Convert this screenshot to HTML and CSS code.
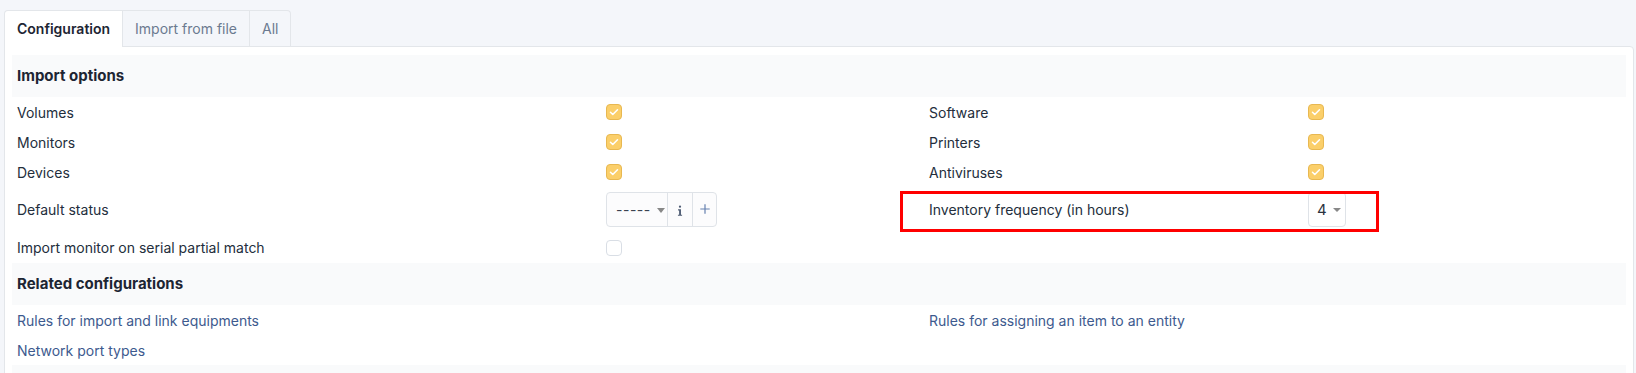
FILE: index.html
```html
<!DOCTYPE html>
<html lang="en">
<head>
<meta charset="utf-8">
<title>Inventory configuration</title>
<link rel="stylesheet" href="styles.css">
</head>
<body>
<div class="page">
  <ul class="tabs">
    <li class="tab active">Configuration</li>
    <li class="tab">Import from file</li>
    <li class="tab">All</li>
  </ul>
  <div class="card">
    <div class="band">Import options</div>
    <div class="grid">
      <div class="cell label">Volumes</div>
      <div class="cell"><span class="check on"><svg viewBox="0 0 16 16"><path d="M4 8.3l2.6 2.5L12 5.4"/></svg></span></div>
      <div class="cell label">Software</div>
      <div class="cell"><span class="check on"><svg viewBox="0 0 16 16"><path d="M4 8.3l2.6 2.5L12 5.4"/></svg></span></div>

      <div class="cell label">Monitors</div>
      <div class="cell"><span class="check on"><svg viewBox="0 0 16 16"><path d="M4 8.3l2.6 2.5L12 5.4"/></svg></span></div>
      <div class="cell label">Printers</div>
      <div class="cell"><span class="check on"><svg viewBox="0 0 16 16"><path d="M4 8.3l2.6 2.5L12 5.4"/></svg></span></div>

      <div class="cell label">Devices</div>
      <div class="cell"><span class="check on"><svg viewBox="0 0 16 16"><path d="M4 8.3l2.6 2.5L12 5.4"/></svg></span></div>
      <div class="cell label">Antiviruses</div>
      <div class="cell"><span class="check on"><svg viewBox="0 0 16 16"><path d="M4 8.3l2.6 2.5L12 5.4"/></svg></span></div>

      <div class="cell label tall">Default status</div>
      <div class="cell tall">
        <div class="group">
          <span class="sel">-----<i class="caret"></i></span>
          <span class="btn"><svg viewBox="0 0 10 16" class="info"><circle cx="5" cy="3.2" r="1.4"/><path d="M2.6 6.4h3.6v6.8h1.4v1.5H2.4v-1.5h1.5V7.9H2.6z"/></svg></span>
          <span class="btn"><svg viewBox="0 0 14 14" class="plus"><path d="M7 1.5v11M1.5 7h11"/></svg></span>
        </div>
      </div>
      <div class="cell label tall">Inventory frequency (in hours)</div>
      <div class="cell tall"><span class="sel small">4<i class="caret"></i></span></div>

      <div class="cell label">Import monitor on serial partial match</div>
      <div class="cell"><span class="check"></span></div>
      <div class="cell"></div>
      <div class="cell"></div>
    </div>
    <div class="band">Related configurations</div>
    <div class="grid">
      <div class="cell span2"><a href="#">Rules for import and link equipments</a></div>
      <div class="cell span2"><a href="#">Rules for assigning an item to an entity</a></div>
      <div class="cell span2"><a href="#">Network port types</a></div>
      <div class="cell span2"></div>
    </div>
    <div class="band"></div>
    <div class="highlight"></div>
  </div>
</div>
</body>
</html>
```

FILE: styles.css
```css
html, body {
  margin: 0;
  padding: 0;
}
body {
  background: #f4f6fa;
  font-family: Inter, "Noto Sans", sans-serif;
  font-size: 14px;
  color: #1f2937;
  height: 373px;
  overflow: hidden;
}
.page {
  padding: 10px 2px 0 4px;
}
.tabs {
  list-style: none;
  margin: 0;
  padding: 0;
  display: flex;
  position: relative;
  z-index: 2;
}
.tab {
  height: 35px;
  line-height: 35px;
  padding: 0 12px;
  border: 1px solid #e3e6ea;
  border-bottom: none;
  margin-right: -1px;
  color: #6b7a90;
  background: #f4f6fa;
}
.tab:first-child {
  border-top-left-radius: 4px;
}
.tab:last-child {
  border-top-right-radius: 4px;
}
.tab.active {
  background: #fff;
  color: #1d2533;
  font-weight: 600;
  height: 36px;
  margin-bottom: -1px;
}
.card {
  position: relative;
  background: #fff;
  border: 1px solid #e3e6ea;
  border-top-right-radius: 4px;
  padding: 8px 7px 0 7px;
  height: 400px;
}
.band {
  height: 42px;
  line-height: 42px;
  background: #f9fafb;
  padding-left: 5px;
  font-weight: 700;
  font-size: 15px;
  color: #1d2533;
}
.grid {
  display: grid;
  grid-template-columns: 589px 323px 379px 1fr;
}
.cell {
  height: 30px;
  display: flex;
  align-items: center;
  padding-left: 5px;
}
.cell.tall {
  height: 45px;
}
.grid .cell:nth-last-child(-n+4) {
  height: 31px;
}
.cell.span2 {
  grid-column: span 2;
  height: 30px !important;
}
.label {
  color: #232e3c;
}
a {
  color: #3d5a8e;
  text-decoration: none;
}
.check {
  width: 14px;
  height: 14px;
  border: 1px solid #d9dee5;
  border-radius: 4px;
  background: #fff;
  display: inline-flex;
  align-items: center;
  justify-content: center;
}
.check.on {
  background: #fbcf6a;
  border-color: #e8b851;
}
.check svg {
  width: 16px;
  height: 16px;
  fill: none;
  stroke: #fff;
  stroke-width: 1.8;
  stroke-linecap: round;
  stroke-linejoin: round;
}
.group {
  display: flex;
  height: 33px;
  border: 1px solid #dfe3e8;
  border-radius: 4px;
  background: #fcfcfd;
}
.sel {
  display: inline-flex;
  align-items: center;
  height: 33px;
  padding: 0 0 0 9px;
  width: 51px;
  color: #3a4250;
  letter-spacing: 0.5px;
  border-right: 1px solid #dfe3e8;
}
.sel.small {
  width: 28px;
  height: 33px;
  border: 1px solid #dfe3e8;
  border-radius: 4px;
  background: #fff;
  padding-left: 8px;
  font-size: 15px;
  color: #2b3340;
}
.caret {
  width: 0;
  height: 0;
  border-left: 4px solid transparent;
  border-right: 4px solid transparent;
  border-top: 5px solid #888;
  margin-left: 6px;
  margin-top: 1px;
}
.sel.small .caret {
  margin-left: 6px;
  border-left-width: 4px;
  border-right-width: 4px;
  border-top-width: 4px;
}
.btn {
  display: inline-flex;
  align-items: center;
  justify-content: center;
  width: 24px;
  height: 33px;
  border-right: 1px solid #dfe3e8;
}
.btn:last-child {
  border-right: none;
  width: 23px;
}
.info {
  width: 8px;
  height: 13px;
  fill: #4d5b73;
  margin-top: 2px;
}
.plus {
  width: 12px;
  height: 12px;
  fill: none;
  stroke: #6580b0;
  stroke-width: 1.4;
  margin-top: -2px;
}
.highlight {
  position: absolute;
  left: 895px;
  top: 144px;
  width: 473px;
  height: 35px;
  border: 3px solid #ff0000;
  pointer-events: none;
}
```
